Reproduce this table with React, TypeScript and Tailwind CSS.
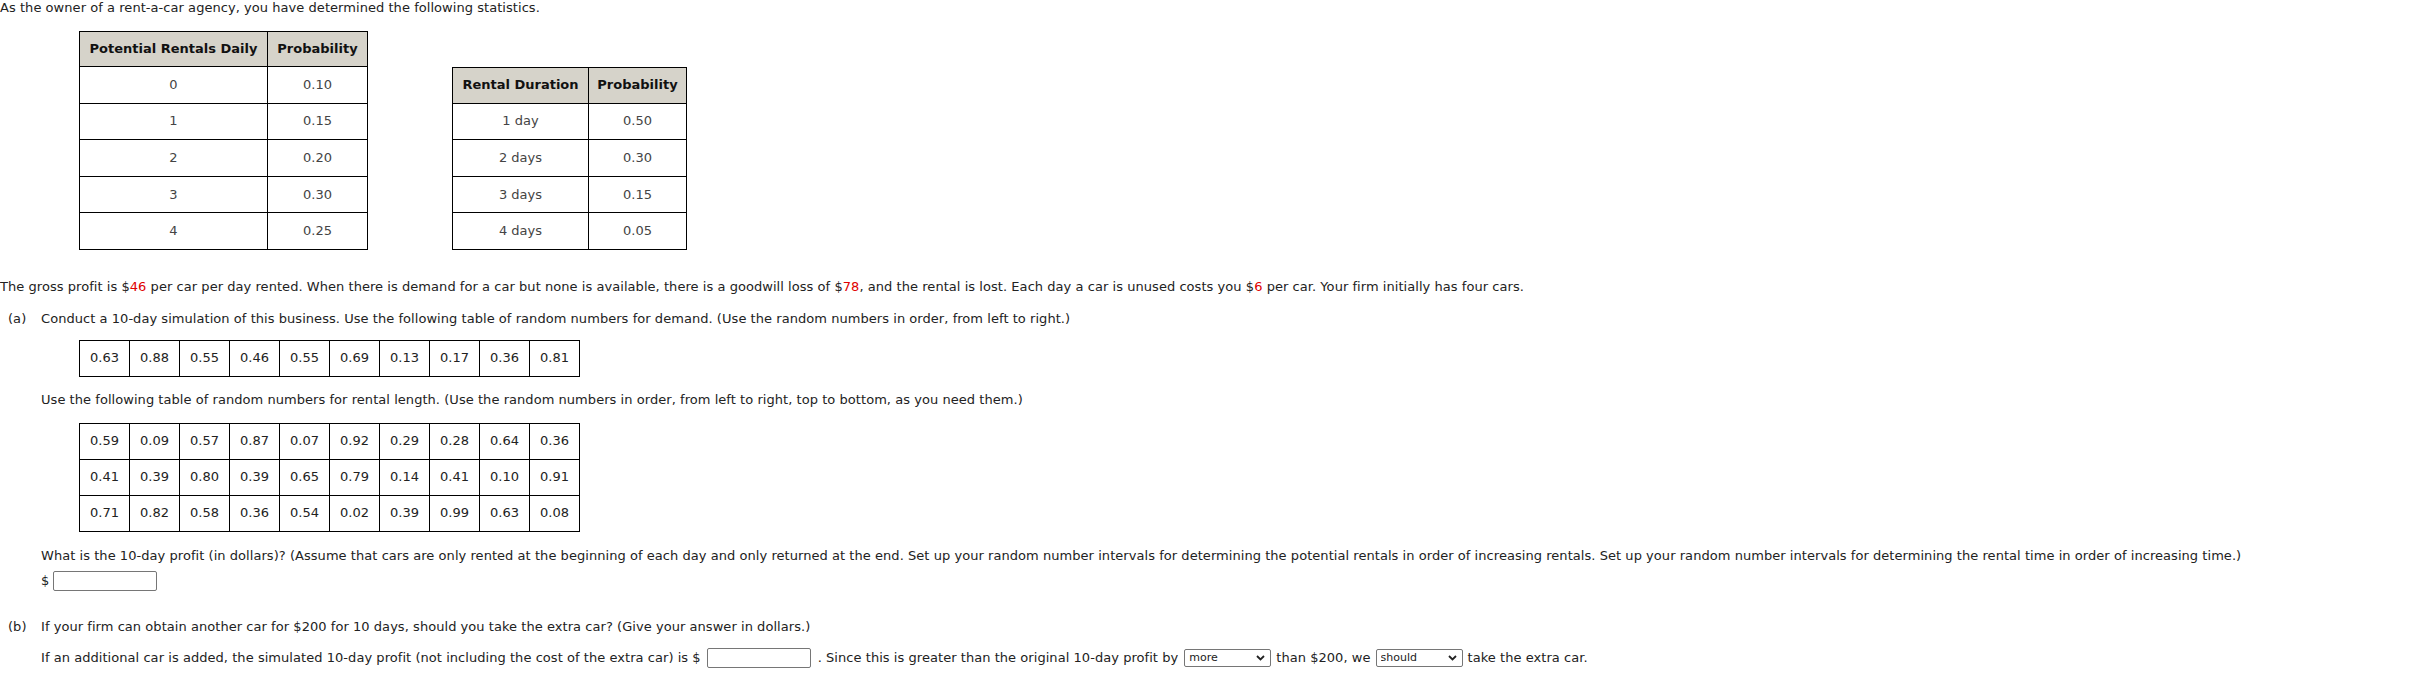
import React from "react";

const rentals = [
  ["0", "0.10"],
  ["1", "0.15"],
  ["2", "0.20"],
  ["3", "0.30"],
  ["4", "0.25"],
];

const durations = [
  ["1 day", "0.50"],
  ["2 days", "0.30"],
  ["3 days", "0.15"],
  ["4 days", "0.05"],
];

const demandNums = ["0.63", "0.88", "0.55", "0.46", "0.55", "0.69", "0.13", "0.17", "0.36", "0.81"];

const lengthNums = [
  ["0.59", "0.09", "0.57", "0.87", "0.07", "0.92", "0.29", "0.28", "0.64", "0.36"],
  ["0.41", "0.39", "0.80", "0.39", "0.65", "0.79", "0.14", "0.41", "0.10", "0.91"],
  ["0.71", "0.82", "0.58", "0.36", "0.54", "0.02", "0.39", "0.99", "0.63", "0.08"],
];

function Red({ children }: { children: React.ReactNode }) {
  return <span className="text-[#e00000]">{children}</span>;
}

function Dropdown({ value }: { value: string }) {
  return (
    <span className="relative block shrink-0">
      <select
        defaultValue={value}
        className="appearance-none block w-[87px] h-[18px] border border-[#767676] rounded-[2px] bg-white pl-[4px] text-[11px] leading-[16px] tracking-normal text-[#222] font-['DejaVu_Sans',Verdana,sans-serif]"
      >
        <option>{value}</option>
      </select>
      <svg
        className="absolute right-[6px] top-[6px] pointer-events-none"
        width="9"
        height="6"
        viewBox="0 0 9 6"
        fill="none"
      >
        <polyline points="1,1 4.5,4.5 8,1" stroke="#222" strokeWidth="1.8" />
      </svg>
    </span>
  );
}

function NumTable({ rows }: { rows: string[][] }) {
  return (
    <table className="border-collapse ml-[38px]">
      <tbody>
        {rows.map((r, i) => (
          <tr key={i}>
            {r.map((n, j) => (
              <td key={j} className="w-[50px] h-[36px] border border-black text-center p-0 text-[#222]">
                {n}
              </td>
            ))}
          </tr>
        ))}
      </tbody>
    </table>
  );
}

export default function App() {
  return (
    <div className="min-h-screen bg-white text-[#222] text-[13px] leading-[16px] tracking-[0.05px] font-['DejaVu_Sans',Verdana,sans-serif]">
      <p>As the owner of a rent-a-car agency, you have determined the following statistics.</p>

      <div className="flex items-end mt-[15px] tracking-normal">
        <table className="border-collapse ml-[79px]">
          <thead>
            <tr className="bg-[#d6d3ca]">
              <th className="w-[188px] h-[35px] border border-black p-0 font-bold text-[#111]">Potential Rentals Daily</th>
              <th className="w-[100px] border border-black p-0 font-bold text-[#111]">Probability</th>
            </tr>
          </thead>
          <tbody>
            {rentals.map(([a, b]) => (
              <tr key={a}>
                <td className="h-[36.6px] border border-black text-center p-0 text-[#444]">{a}</td>
                <td className="border border-black text-center p-0 text-[#444]">{b}</td>
              </tr>
            ))}
          </tbody>
        </table>

        <table className="border-collapse ml-[84px]">
          <thead>
            <tr className="bg-[#d6d3ca]">
              <th className="w-[136px] h-[36px] border border-black p-0 font-bold text-[#111]">Rental Duration</th>
              <th className="w-[98px] border border-black p-0 font-bold text-[#111]">Probability</th>
            </tr>
          </thead>
          <tbody>
            {durations.map(([a, b]) => (
              <tr key={a}>
                <td className="h-[36.6px] border border-black text-center p-0 text-[#444]">{a}</td>
                <td className="border border-black text-center p-0 text-[#444]">{b}</td>
              </tr>
            ))}
          </tbody>
        </table>
      </div>

      <p className="mt-[29px]">
        The gross profit is $<Red>46</Red> per car per day rented. When there is demand for a car but none is
        available, there is a goodwill loss of $<Red>78</Red>, and the rental is lost. Each day a car is unused costs
        you $<Red>6</Red> per car. Your firm initially has four cars.
      </p>

      <div className="flex mt-[16px]">
        <span className="w-[33px] ml-[8px] shrink-0">(a)</span>
        <div>
          <p>
            Conduct a 10-day simulation of this business. Use the following table of random numbers for demand. (Use
            the random numbers in order, from left to right.)
          </p>
          <div className="mt-[13px] tracking-normal">
            <NumTable rows={[demandNums]} />
          </div>
          <p className="mt-[15px]">
            Use the following table of random numbers for rental length. (Use the random numbers in order, from left
            to right, top to bottom, as you need them.)
          </p>
          <div className="mt-[15px] tracking-normal">
            <NumTable rows={lengthNums} />
          </div>
          <p className="mt-[16px]">
            What is the 10-day profit (in dollars)? (Assume that cars are only rented at the beginning of each day and
            only returned at the end. Set up your random number intervals for determining the potential rentals in
            order of increasing rentals. Set up your random number intervals for determining the rental time in order of
            increasing time.)
          </p>
          <div className="mt-[7px] flex items-center">
            <span>$</span>
            <input type="text" className="ml-[4px] w-[104px] h-[20px] border border-[#767676] rounded-[2px] bg-white" />
          </div>
        </div>
      </div>

      <div className="flex mt-[28px]">
        <span className="w-[33px] ml-[8px] shrink-0">(b)</span>
        <div>
          <p>If your firm can obtain another car for $200 for 10 days, should you take the extra car? (Give your answer in dollars.)</p>
          <div className="mt-[13px] flex items-center whitespace-nowrap">
            <span>If an additional car is added, the simulated 10-day profit (not including the cost of the extra car) is $</span>
            <input type="text" className="ml-[6px] w-[104px] h-[20px] border border-[#767676] rounded-[2px] bg-white shrink-0" />
            <span className="ml-[7px]">. Since this is greater than the original 10-day profit by</span>
            <span className="ml-[6px]"><Dropdown value="more" /></span>
            <span className="ml-[5px]">than $200, we</span>
            <span className="ml-[5px]"><Dropdown value="should" /></span>
            <span className="ml-[5px]">take the extra car.</span>
          </div>
        </div>
      </div>
    </div>
  );
}
